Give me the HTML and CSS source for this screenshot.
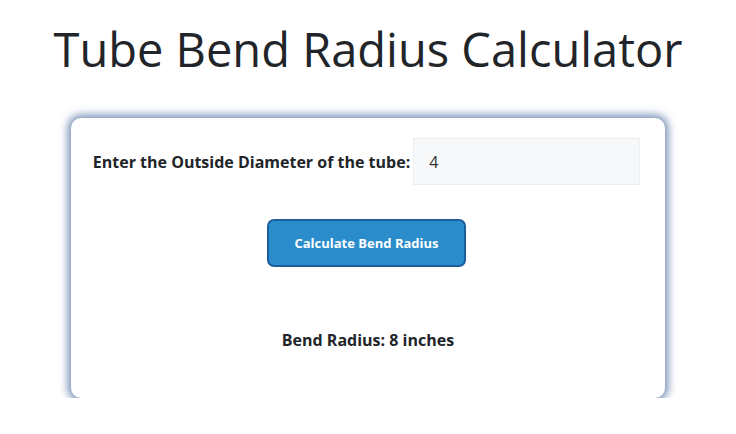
FILE: index.html
```html
<!DOCTYPE html>
<html lang="en">
<head>
  <meta charset="UTF-8">
  <meta name="viewport" content="width=device-width, initial-scale=1.0">
  <title>Tube Bend Radius Calculator</title>
  <link rel="stylesheet" href="styles.css">
</head>
<body>
  <h1>Tube Bend Radius Calculator</h1>
  <div class="container">
    <div class="row">
      <label for="diameter">Enter the Outside Diameter of the tube:</label>
      <input type="number" id="diameter" value="4">
    </div>
    <button onclick="calculateRadius()">Calculate Bend Radius</button>
    <p class="result" id="result">Bend Radius: 8 inches</p>
  </div>

  <script>
    function calculateRadius() {
      const od = parseFloat(document.getElementById('diameter').value) || 0;
      // Bend radius is twice the outside diameter
      document.getElementById('result').innerText = 'Bend Radius: ' + (od * 2) + ' inches';
    }
  </script>
</body>
</html>
```

FILE: styles.css
```css
body {
  font-family: "Open Sans", Arial, sans-serif;
  margin: 0;
  background-color: #fff;
  color: #212529;
}
h1 {
  font-weight: 400;
  font-size: 47px;
  text-align: center;
  margin: 21px 0 41px;
  line-height: 1.2;
}
.container {
  width: 594px;
  height: 280px;
  margin: 0 auto;
  box-sizing: border-box;
  border-radius: 10px;
  background-color: #fff;
  box-shadow: 0 0 9px 3px rgba(80, 112, 160, 0.8);
  padding: 20px 22px;
  text-align: center;
}
.row {
  display: flex;
  align-items: center;
  justify-content: center;
  gap: 3px;
  margin-left: -3px;
}
label {
  font-weight: 700;
  font-size: 16px;
}
input {
  width: 227px;
  height: 47px;
  box-sizing: border-box;
  border: 1px solid #eceef0;
  background-color: #f7f8fa;
  font-family: inherit;
  font-size: 16px;
  padding: 0 15px;
  color: #333;
}
button {
  margin: 34px 0 0 -3px;
  width: 199px;
  height: 48px;
  background-color: #2b8ccb;
  color: #fff;
  border: 2px solid #1c5d9c;
  border-radius: 7px;
  font-family: inherit;
  font-weight: 700;
  font-size: 13px;
  cursor: pointer;
}
button:hover {
  background-color: #2579b0;
}
.result {
  font-weight: 700;
  font-size: 16px;
  margin: 62px 0 0;
}
```
